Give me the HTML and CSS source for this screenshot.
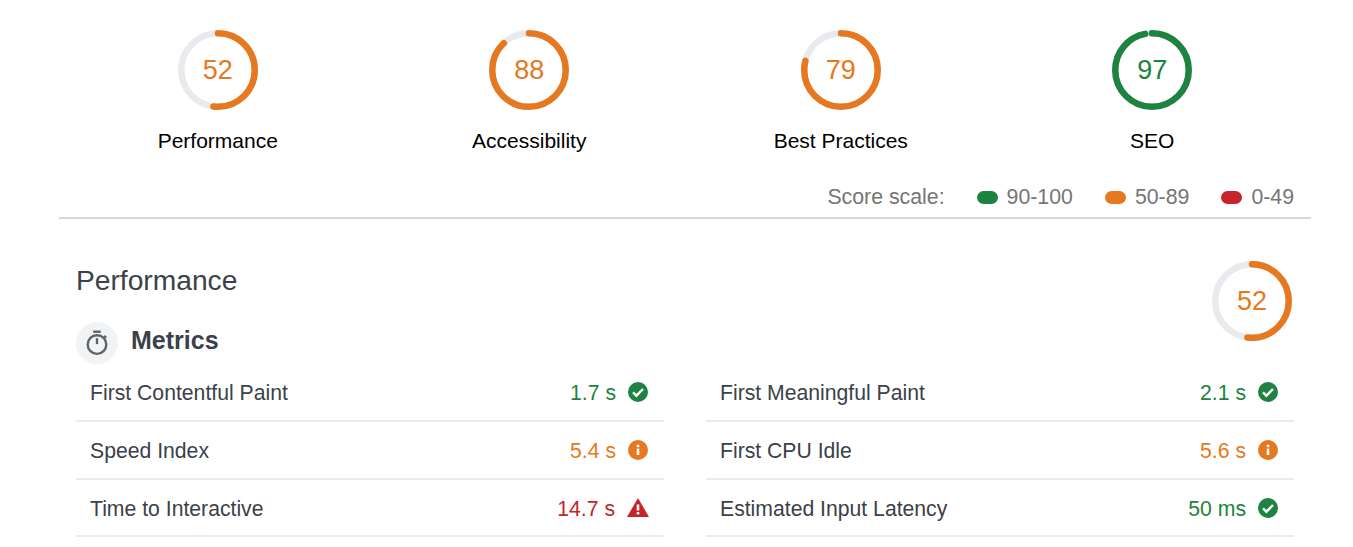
FILE: index.html
```html
<!DOCTYPE html>
<html lang="en">
<head>
<meta charset="utf-8">
<title>Lighthouse report</title>
<link rel="stylesheet" href="styles.css">
</head>
<body>
<main class="report">
  <section class="gauges">
    <div class="gauge-item">
      <div class="gauge orange">
        <svg class="ring" viewBox="0 0 80 80"><circle class="track" cx="40" cy="40" r="36.75"/><circle class="arc" cx="40" cy="40" r="36.75" pathLength="100" stroke-dasharray="52 100"/></svg>
        <span class="gauge-num">52</span>
      </div>
      <div class="gauge-label">Performance</div>
    </div>
    <div class="gauge-item">
      <div class="gauge orange">
        <svg class="ring" viewBox="0 0 80 80"><circle class="track" cx="40" cy="40" r="36.75"/><circle class="arc" cx="40" cy="40" r="36.75" pathLength="100" stroke-dasharray="88 100"/></svg>
        <span class="gauge-num">88</span>
      </div>
      <div class="gauge-label">Accessibility</div>
    </div>
    <div class="gauge-item">
      <div class="gauge orange">
        <svg class="ring" viewBox="0 0 80 80"><circle class="track" cx="40" cy="40" r="36.75"/><circle class="arc" cx="40" cy="40" r="36.75" pathLength="100" stroke-dasharray="79 100"/></svg>
        <span class="gauge-num">79</span>
      </div>
      <div class="gauge-label">Best Practices</div>
    </div>
    <div class="gauge-item">
      <div class="gauge green">
        <svg class="ring" viewBox="0 0 80 80"><circle class="track" cx="40" cy="40" r="36.75"/><circle class="arc" cx="40" cy="40" r="36.75" pathLength="100" stroke-dasharray="97 100"/></svg>
        <span class="gauge-num">97</span>
      </div>
      <div class="gauge-label">SEO</div>
    </div>
  </section>

  <section class="scale">
    <span class="scale-title">Score scale:</span>
    <span class="scale-item"><i class="pill pill-green"></i>90-100</span>
    <span class="scale-item"><i class="pill pill-orange"></i>50-89</span>
    <span class="scale-item"><i class="pill pill-red"></i>0-49</span>
  </section>

  <section class="category">
    <div class="cat-head">
      <h2 class="cat-title">Performance</h2>
      <div class="gauge orange">
        <svg class="ring" viewBox="0 0 80 80"><circle class="track" cx="40" cy="40" r="36.75"/><circle class="arc" cx="40" cy="40" r="36.75" pathLength="100" stroke-dasharray="52 100"/></svg>
        <span class="gauge-num">52</span>
      </div>
    </div>
    <div class="metrics-head">
      <span class="metrics-icon">
        <svg viewBox="0 0 24 24" width="26" height="26"><path d="M8.5 1.6h7" class="tick"/><path d="M12 7.5v5.5" class="tick"/><circle cx="12" cy="13.4" r="8.6" class="tick"/><path d="M18.6 5.4l1.8 1.8" class="tick"/></svg>
      </span>
      <h3 class="metrics-title">Metrics</h3>
    </div>
    <div class="metrics-grid">
      <div class="metric"><span class="m-name">First Contentful Paint</span><span class="m-val c-green">1.7 s</span><svg class="m-icon" viewBox="0 0 20 20"><circle cx="10" cy="10" r="10" class="f-green"/><path d="M5 10.4l3.4 3.3L15 7" class="mark"/></svg></div>
      <div class="metric"><span class="m-name">First Meaningful Paint</span><span class="m-val c-green">2.1 s</span><svg class="m-icon" viewBox="0 0 20 20"><circle cx="10" cy="10" r="10" class="f-green"/><path d="M5 10.4l3.4 3.3L15 7" class="mark"/></svg></div>
      <div class="metric"><span class="m-name">Speed Index</span><span class="m-val c-orange">5.4 s</span><svg class="m-icon" viewBox="0 0 20 20"><circle cx="10" cy="10" r="10" class="f-orange"/><rect x="8.7" y="4.8" width="2.6" height="2.4" class="f-white"/><rect x="8.7" y="8.6" width="2.6" height="6.4" class="f-white"/></svg></div>
      <div class="metric"><span class="m-name">First CPU Idle</span><span class="m-val c-orange">5.6 s</span><svg class="m-icon" viewBox="0 0 20 20"><circle cx="10" cy="10" r="10" class="f-orange"/><rect x="8.7" y="4.8" width="2.6" height="2.4" class="f-white"/><rect x="8.7" y="8.6" width="2.6" height="6.4" class="f-white"/></svg></div>
      <div class="metric"><span class="m-name">Time to Interactive</span><span class="m-val c-red">14.7 s</span><svg class="m-icon m-warn" viewBox="0 0 22 19"><path d="M11 0L22 19H0z" class="f-red"/><rect x="9.7" y="6.5" width="2.6" height="6" class="f-white"/><rect x="9.7" y="14" width="2.6" height="2.4" class="f-white"/></svg></div>
      <div class="metric"><span class="m-name">Estimated Input Latency</span><span class="m-val c-green">50 ms</span><svg class="m-icon" viewBox="0 0 20 20"><circle cx="10" cy="10" r="10" class="f-green"/><path d="M5 10.4l3.4 3.3L15 7" class="mark"/></svg></div>
    </div>
  </section>
</main>
</body>
</html>
```

FILE: styles.css
```css
* { box-sizing: border-box; }
html, body { margin: 0; padding: 0; background: #fff; }
body { font-family: "Liberation Sans", Arial, sans-serif; color: #3b4149; height: 547px; overflow: hidden; }

.report { width: 1252px; margin-left: 59px; padding-top: 30px; }

.gauges { display: grid; grid-template-columns: repeat(4, 311.5px); padding-left: 3px; }
.gauge-item { display: flex; flex-direction: column; align-items: center; }
.gauge { position: relative; width: 80px; height: 80px; flex: none; }
.ring { display: block; width: 80px; height: 80px; transform: rotate(-90deg); }
.track { fill: none; stroke: #e8eaed; stroke-width: 6.5; }
.arc { fill: none; stroke-width: 6.5; stroke-linecap: round; }
.orange .arc { stroke: #e67820; }
.green .arc { stroke: #1e8240; }
.gauge-num { position: absolute; inset: 0; display: flex; align-items: center; justify-content: center; font-size: 27px; }
.orange .gauge-num { color: #e67820; }
.green .gauge-num { color: #1e8240; }
.gauge-label { margin-top: 18px; font-size: 21px; line-height: 26px; color: #000; }

.scale { display: flex; justify-content: flex-end; align-items: center; margin-top: 30px; height: 35px; padding-right: 17px; padding-bottom: 7px; border-bottom: 2px solid #d8d8d8; font-size: 21.3px; color: #757575; }
.scale-item { display: flex; align-items: center; margin-left: 32px; }
.pill { width: 21px; height: 13px; border-radius: 7px; margin-right: 9px; }
.pill-green { background: #1e8240; }
.pill-orange { background: #e67820; }
.pill-red { background: #c5242a; }

.category { padding: 0 17px; }
.cat-head { display: flex; justify-content: space-between; padding-top: 42px; height: 103px; padding-right: 2px; }
.cat-title { margin: 1px 0 0; font-size: 28.2px; line-height: 36px; font-weight: 400; color: #3b4149; }
.metrics-head { display: flex; align-items: center; height: 42px; }
.metrics-icon { width: 42px; height: 42px; border-radius: 50%; background: #f1f3f4; display: flex; align-items: center; justify-content: center; }
.metrics-title { margin: 0 0 5px 13px; font-size: 25px; font-weight: 700; color: #3b4149; }
.tick { fill: none; stroke: #5f6368; stroke-width: 2.2; }

.metrics-grid { display: grid; grid-template-columns: 588px 588px; column-gap: 42px; margin-top: 0.6px; }
.metric { display: flex; align-items: center; height: 57.6px; padding: 0 16px 0 14px; border-bottom: 2px solid #ebebeb; font-size: 21.2px; }
.m-name { flex: 1; padding-top: 2px; }
.m-val { margin-right: 12px; padding-top: 2px; }
.m-icon { width: 20px; height: 20px; flex: none; }
.m-warn { width: 22px; height: 19px; margin-right: -1px; }
.c-green { color: #1e8240; }
.c-orange { color: #e67820; }
.c-red { color: #c5242a; }
.f-green { fill: #1e8240; }
.f-orange { fill: #e67820; }
.f-red { fill: #c5242a; }
.f-white { fill: #fff; }
.mark { fill: none; stroke: #fff; stroke-width: 2.4; }
```
